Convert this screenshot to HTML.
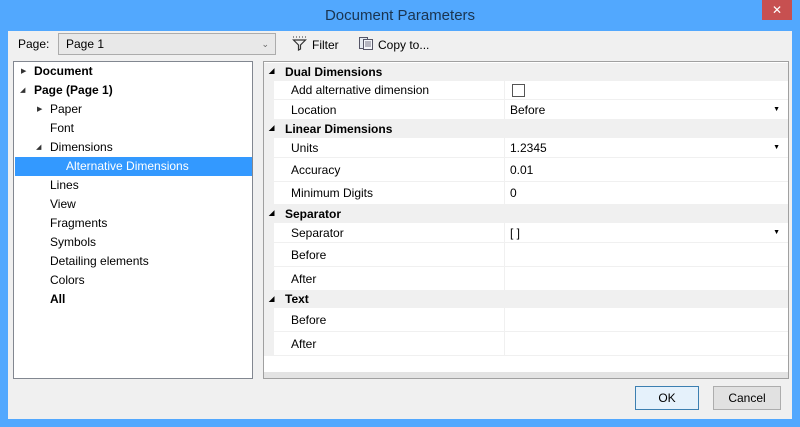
<!DOCTYPE html>
<html><head><meta charset="utf-8"><style>
*{margin:0;padding:0;box-sizing:border-box}
body{width:800px;height:427px;background:#52a8fe;position:relative;overflow:hidden;font-family:"Liberation Sans",sans-serif;font-size:12px;color:#000}
.a{position:absolute}
.title{left:0;top:0;width:800px;height:31px;text-align:center;line-height:31px;font-size:15px;color:#1a3450}
.close{left:762px;top:0;width:30px;height:20px;background:#c75050;color:#fff;text-align:center;line-height:20px;font-size:12px}
.client{left:8px;top:31px;width:784px;height:388px;background:#f0f0f0}
.combo{left:58px;top:33px;width:218px;height:22px;border:1px solid #acacac;background:#e8e8e8;line-height:20px;padding-left:7px}
.tree{left:13px;top:61px;width:240px;height:318px;border:1px solid #828790;background:#fff}
.ti{position:absolute;height:19px;line-height:19px;white-space:nowrap}
.ar{font-size:7px;color:#333}
.b{font-weight:bold}
.grid{left:263px;top:61px;width:526px;height:318px;border:1px solid #a0a0a0;background:#fff}
.row{position:absolute;left:0;width:524px;border-bottom:1px solid #f0f0f0}
.cat{background:#f0f0f0;font-weight:bold}
.lbl{position:absolute;left:27px}
.val{position:absolute;left:246px}
.gut{position:absolute;left:0;top:0;width:10px;height:100%;background:#f0f0f0}
.div{position:absolute;left:240px;top:0;width:1px;height:100%;background:#f0f0f0}
.dd{position:absolute;right:8px;top:0;font-size:7px}
.btn{height:24px;border:1px solid #adadad;background:#e1e1e1;text-align:center;line-height:22px}
</style></head><body>
<div class="a title">Document Parameters</div>
<div class="a close">✕</div>
<div class="a client"></div>
<div class="a" style="left:18px;top:37px">Page:</div>
<div class="a combo">Page 1<span style="position:absolute;right:6px;top:0;font-size:9px;color:#666">⌄</span></div>
<svg class="a" style="left:292px;top:36px" width="16" height="16" viewBox="0 0 16 16"><path d="M1 1h1M4 1h1M7 1h1M10 1h1M13 1h1" stroke="#555" stroke-width="1.2"/><path d="M1.5 4h12l-5 5v4l-2 1v-5z" fill="none" stroke="#333" stroke-width="1.2"/></svg>
<div class="a" style="left:312px;top:38px">Filter</div>
<svg class="a" style="left:358px;top:35px" width="16" height="16" viewBox="0 0 16 16"><rect x="1.5" y="2.5" width="8" height="11" fill="#e6eaf0" stroke="#556"/><rect x="5.5" y="4.5" width="9" height="10" fill="#f4f6fa" stroke="#556"/><path d="M7 7h6M7 9h6M7 11h6" stroke="#778"/></svg>
<div class="a" style="left:378px;top:38px">Copy to...</div>

<div class="a tree">
<div class="ti ar" style="left:7px;top:0">▶</div><div class="ti b" style="left:20px;top:0">Document</div>
<div class="ti ar" style="left:6px;top:19px">◢</div><div class="ti b" style="left:20px;top:19px">Page (Page 1)</div>
<div class="ti ar" style="left:23px;top:38px">▶</div><div class="ti" style="left:36px;top:38px">Paper</div>
<div class="ti" style="left:36px;top:57px">Font</div>
<div class="ti ar" style="left:22px;top:76px">◢</div><div class="ti" style="left:36px;top:76px">Dimensions</div>
<div class="ti" style="left:1px;top:95px;width:237px;background:#3399ff;color:#fff;padding-left:51px">Alternative Dimensions</div>
<div class="ti" style="left:36px;top:114px">Lines</div>
<div class="ti" style="left:36px;top:133px">View</div>
<div class="ti" style="left:36px;top:152px">Fragments</div>
<div class="ti" style="left:36px;top:171px">Symbols</div>
<div class="ti" style="left:36px;top:190px">Detailing elements</div>
<div class="ti" style="left:36px;top:209px">Colors</div>
<div class="ti b" style="left:36px;top:228px">All</div>
</div>

<div class="a grid">
<div class="row cat" style="top:1px;height:18px;line-height:18px"><span style="position:absolute;left:5px;font-size:7px">◢</span><span style="position:absolute;left:21px">Dual Dimensions</span></div>
<div class="row" style="top:19px;height:19px;line-height:19px"><div class="gut"></div><div class="div"></div><span class="lbl">Add alternative dimension</span><span style="position:absolute;left:248px;top:3px;width:13px;height:13px;border:1px solid #555"></span></div>
<div class="row" style="top:38px;height:20px;line-height:20px"><div class="gut"></div><div class="div"></div><span class="lbl">Location</span><span class="val">Before</span><span class="dd">▼</span></div>
<div class="row cat" style="top:58px;height:18px;line-height:18px"><span style="position:absolute;left:5px;font-size:7px">◢</span><span style="position:absolute;left:21px">Linear Dimensions</span></div>
<div class="row" style="top:76px;height:20px;line-height:20px"><div class="gut"></div><div class="div"></div><span class="lbl">Units</span><span class="val">1.2345</span><span class="dd">▼</span></div>
<div class="row" style="top:96px;height:24px;line-height:24px"><div class="gut"></div><div class="div"></div><span class="lbl">Accuracy</span><span class="val">0.01</span></div>
<div class="row" style="top:120px;height:23px;line-height:23px"><div class="gut"></div><div class="div"></div><span class="lbl">Minimum Digits</span><span class="val">0</span></div>
<div class="row cat" style="top:143px;height:18px;line-height:18px"><span style="position:absolute;left:5px;font-size:7px">◢</span><span style="position:absolute;left:21px">Separator</span></div>
<div class="row" style="top:161px;height:20px;line-height:20px"><div class="gut"></div><div class="div"></div><span class="lbl">Separator</span><span class="val">[ ]</span><span class="dd">▼</span></div>
<div class="row" style="top:181px;height:24px;line-height:24px"><div class="gut"></div><div class="div"></div><span class="lbl">Before</span></div>
<div class="row" style="top:205px;height:24px;line-height:24px"><div class="gut"></div><div class="div"></div><span class="lbl">After</span></div>
<div class="row cat" style="top:229px;height:17px;line-height:17px"><span style="position:absolute;left:5px;font-size:7px">◢</span><span style="position:absolute;left:21px">Text</span></div>
<div class="row" style="top:246px;height:24px;line-height:24px"><div class="gut"></div><div class="div"></div><span class="lbl">Before</span></div>
<div class="row" style="top:270px;height:24px;line-height:24px"><div class="gut"></div><div class="div"></div><span class="lbl">After</span></div>
<div style="position:absolute;left:0;top:310px;width:524px;height:6px;background:#e3e3e3"></div>
</div>

<div class="a btn" style="left:635px;top:386px;width:64px;border-color:#3c7fb1;background:#e5f1fb">OK</div>
<div class="a btn" style="left:713px;top:386px;width:68px">Cancel</div>
</body></html>
